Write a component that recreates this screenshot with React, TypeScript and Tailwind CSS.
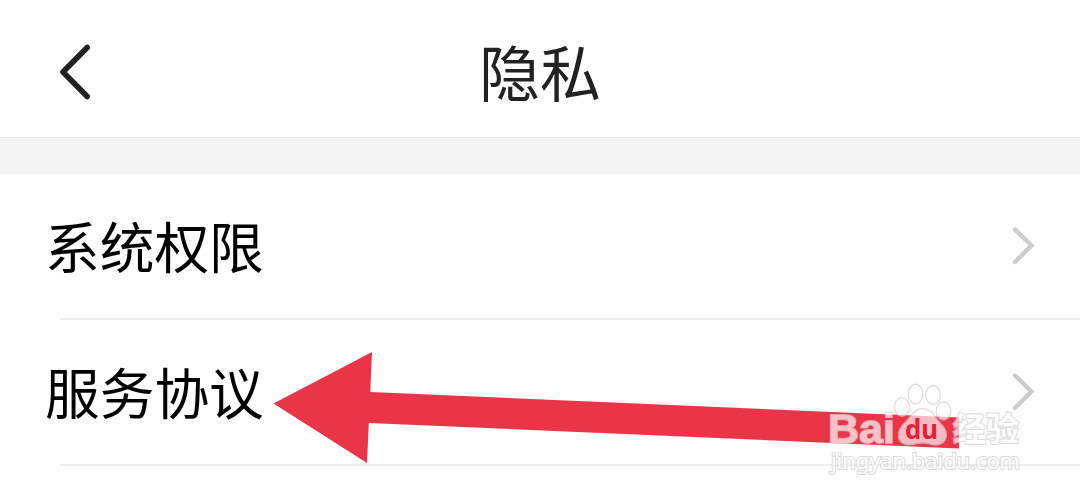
import React from "react";

interface SettingRowProps {
    label: string;
}

const ChevronRight: React.FC = () => (
    <svg className="w-[26px] h-[42px]" viewBox="0 0 26 42" fill="none">
        <path d="M4 4.5L20.5 20.5L4 37" stroke="#cccccc" strokeWidth="4.4" strokeLinecap="round" />
    </svg>
);

const SettingRow: React.FC<SettingRowProps> = ({ label }) => {
    return (
        <li>
            <button className="flex w-full h-36 items-center justify-between pl-[45px] pr-[43px]">
                <span className="mb-0.5 text-[54.7px] leading-none text-black">{label}</span>
                <ChevronRight />
            </button>
            <div className="ml-[60px] h-0.5 bg-[#ededed]" />
        </li>
    );
};

const Arrow: React.FC = () => (
    <svg
        className="pointer-events-none absolute left-[273px] top-[351px] w-[687px] h-[113px]"
        viewBox="273 351 687 113"
    >
        <path d="M273.5 403.5L372 352L370.3 392L959.5 417.5L959 448.5L368.8 423L367 463Z" fill="#ea3548" />
    </svg>
);

const Watermark: React.FC = () => (
    <svg
        className="pointer-events-none absolute left-[820px] top-[375px] w-[210px] h-[105px] opacity-70"
        viewBox="820 375 210 105"
        fill="#ffffff"
        stroke="#cfcfcf"
        strokeWidth="1.3"
    >
        <g fillOpacity="0.95">
            <ellipse cx="902" cy="407" rx="7.5" ry="9.3" />
            <ellipse cx="915.5" cy="394" rx="7.3" ry="9.8" />
            <ellipse cx="933" cy="395" rx="7.3" ry="9.5" />
            <ellipse cx="943.5" cy="411" rx="7.3" ry="9" />
            <path d="M922.5 408.5C914 408.5 911.5 416 906 421.5C901 426 898 430 898.5 436.5C900 446.5 910 445.5 917 443.5Q922.5 442.5 928 443.5C936 446.5 945 445.5 946.5 436C947 430 943 426 939 421.5C934 416 931.5 408.5 922.5 408.5Z" />
        </g>
        <text
            x="828"
            y="442.5"
            fontSize="41.5"
            textLength="67"
            lengthAdjust="spacingAndGlyphs"
            paintOrder="stroke"
            strokeWidth="1.8"
            className="font-['Liberation_Sans',sans-serif] font-bold"
        >
            Bai
        </text>
        <text
            x="905"
            y="438.5"
            fontSize="26"
            textLength="33"
            lengthAdjust="spacingAndGlyphs"
            fill="#e0162e"
            stroke="none"
            className="font-['Noto_Sans',sans-serif] font-bold"
        >
            du
        </text>
        <text
            x="953"
            y="441"
            fontSize="33"
            textLength="66"
            lengthAdjust="spacingAndGlyphs"
            paintOrder="stroke"
            strokeWidth="2.2"
            className="font-['Noto_Sans_CJK_SC',sans-serif] font-bold"
        >
            经验
        </text>
        <text
            x="831"
            y="469"
            fontSize="22"
            textLength="189"
            lengthAdjust="spacingAndGlyphs"
            paintOrder="stroke"
            strokeWidth="2.2"
            className="font-['Noto_Sans',sans-serif] font-normal"
        >
            jingyan.baidu.com
        </text>
    </svg>
);

const App: React.FC = () => {
    return (
        <div className="relative w-[1080px] h-[499px] overflow-hidden bg-[#fefefe] font-['Noto_Sans_CJK_SC',sans-serif]">
            <header className="grid grid-cols-[1fr_auto_1fr] h-[138px] items-center border-b border-[#e5e5e5]">
                <button className="pl-[56px] mt-[7px]">
                    <svg className="w-[38px] h-[60px]" viewBox="0 0 38 60" fill="none">
                        <path
                            d="M31.2 5.5L7 30L31.2 54.5"
                            stroke="#202020"
                            strokeWidth="5.6"
                            strokeLinecap="round"
                            strokeLinejoin="round"
                        />
                    </svg>
                </button>
                <h1 className="mt-[3px] text-[61px] leading-none text-[#222222]">隐私</h1>
            </header>
            <div className="h-9 bg-[#f4f4f4]" />

            <ul>
                <SettingRow label="系统权限" />
                <SettingRow label="服务协议" />
            </ul>

            <Arrow />
            <Watermark />
        </div>
    );
};

export default App;
